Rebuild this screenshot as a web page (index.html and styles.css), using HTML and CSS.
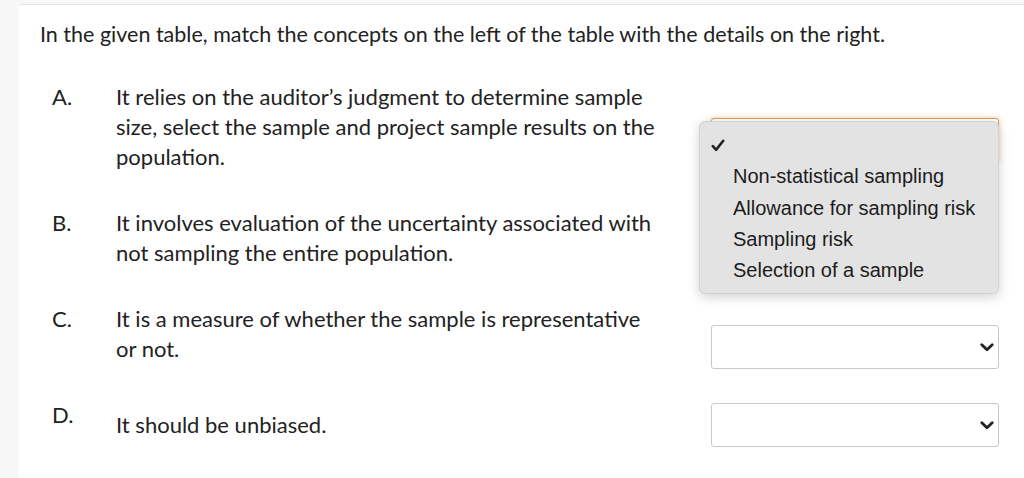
FILE: index.html
```html
<!DOCTYPE html>
<html>
<head>
    <title>Matching Question</title>
    <link rel="stylesheet" href="styles.css">
</head>
<body>

    <div class="panel">
        <p class="question">In the given table, match the concepts on the left of the table with the details on the right.</p>

        <div class="match-table">
            <div class="row">
                <div class="letter">A.</div>
                <p class="concept">It relies on the auditor’s judgment to determine sample size, select the sample and project sample results on the population.</p>
                <div class="answer">
                    <div class="select focused"></div>
                    <div class="menu">
                        <div class="menu-item checked">
                            <svg class="check" width="14" height="13" viewBox="0 0 14 13"><path d="M1.8 7.2 L5.2 10.8 L12.2 1.8" fill="none" stroke="#222" stroke-width="2.6" stroke-linecap="round" stroke-linejoin="round"/></svg>
                        </div>
                        <div class="menu-item">Non-statistical sampling</div>
                        <div class="menu-item">Allowance for sampling risk</div>
                        <div class="menu-item">Sampling risk</div>
                        <div class="menu-item">Selection of a sample</div>
                    </div>
                </div>
            </div>

            <div class="row">
                <div class="letter">B.</div>
                <p class="concept">It involves evaluation of the uncertainty associated with not sampling the entire population.</p>
                <div class="answer">
                    <div class="select">
                        <svg class="chevron" width="14" height="9" viewBox="0 0 14 9"><path d="M1.8 1.8 L7 6.8 L12.2 1.8" fill="none" stroke="#222" stroke-width="2.8" stroke-linecap="round" stroke-linejoin="round"/></svg>
                    </div>
                </div>
            </div>

            <div class="row">
                <div class="letter">C.</div>
                <p class="concept">It is a measure of whether the sample is representative or not.</p>
                <div class="answer">
                    <div class="select">
                        <svg class="chevron" width="14" height="9" viewBox="0 0 14 9"><path d="M1.8 1.8 L7 6.8 L12.2 1.8" fill="none" stroke="#222" stroke-width="2.8" stroke-linecap="round" stroke-linejoin="round"/></svg>
                    </div>
                </div>
            </div>

            <div class="row last">
                <div class="letter">D.</div>
                <p class="concept">It should be unbiased.</p>
                <div class="answer">
                    <div class="select">
                        <svg class="chevron" width="14" height="9" viewBox="0 0 14 9"><path d="M1.8 1.8 L7 6.8 L12.2 1.8" fill="none" stroke="#222" stroke-width="2.8" stroke-linecap="round" stroke-linejoin="round"/></svg>
                    </div>
                </div>
            </div>
        </div>
    </div>

</body>
</html>
```

FILE: styles.css
```css
body {
    margin: 0;
    background-color: #f7f7f7;
    font-family: Lato, 'Open Sans', sans-serif;
    color: #222;
}

.panel {
    margin: 4px 0 0 19px;
    border-top: 1px solid #e4e4e4;
    background-color: #fff;
    padding: 0 0 0 21px;
    height: 474px;
    box-sizing: border-box;
}

.question {
    margin: 0;
    padding-top: 15px;
    font-size: 21.5px;
    line-height: 28px;
}

.match-table {
    margin: 34px 0 0 12px;
}

.row {
    display: grid;
    grid-template-columns: 64px 595px 288px;
    align-items: center;
    margin-bottom: 10px;
}

.row.last {
    align-items: start;
}

.letter {
    align-self: start;
    font-size: 22px;
    line-height: 30px;
}

.concept {
    margin: 0 0 26px 0;
    font-size: 22px;
    line-height: 30px;
    padding-right: 52px;
}

.row.last .concept {
    margin: 10px 0 0 0;
}

.row.last .select {
    margin-top: 3px;
}

.answer {
    position: relative;
}

.select {
    height: 44px;
    border: 1px solid #c9c9c9;
    border-radius: 3px;
    background-color: #fff;
    box-sizing: border-box;
    display: flex;
    align-items: center;
    justify-content: flex-end;
    padding-right: 4px;
}

.select.focused {
    border: 1px solid #e0a050;
    box-shadow: 0 0 4px rgba(230, 150, 60, 0.5);
}

.menu {
    position: absolute;
    z-index: 10;
    left: -12px;
    top: 3px;
    width: 300px;
    box-sizing: border-box;
    padding: 8px 0 7px 0;
    background-color: #e3e3e3;
    border: 1px solid #d2d2d2;
    border-radius: 6px;
    box-shadow: 0 3px 12px rgba(0, 0, 0, 0.18);
    font-family: 'Liberation Sans', Arial, sans-serif;
    font-size: 20px;
    color: #1c1c1c;
}

.menu-item {
    height: 31.3px;
    line-height: 31.3px;
    padding-left: 33px;
}

.menu-item.checked {
    padding-left: 11px;
    display: flex;
    align-items: center;
}
```
